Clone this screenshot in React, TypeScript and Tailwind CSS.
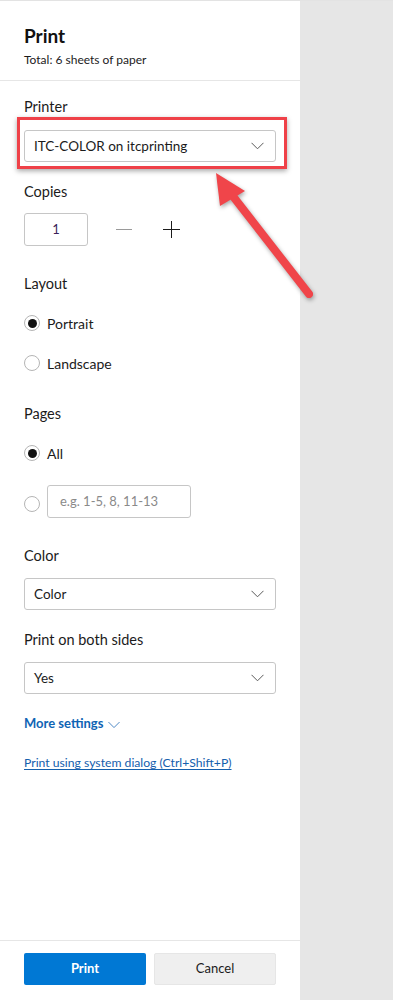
import React from "react";

// ============================================================================
// SMALL PIECES
// ============================================================================

const Chevron = ({ className = "" }: { className?: string }) => (
  <svg className={className} width="13" height="8" viewBox="0 0 13 8" fill="none">
    <path d="M0.5 0.8L6.5 6.8L12.5 0.8" stroke="currentColor" strokeWidth="1" />
  </svg>
);

const Select = ({ value }: { value: string }) => (
  <div className="flex h-8 w-[252px] items-center justify-between rounded-[3px] border border-[#c6c6c6] bg-white pl-[9px] pr-[11px] text-[13.5px] text-[#1b1b1b]">
    <span>{value}</span>
    <Chevron className="text-[#5a5a5a]" />
  </div>
);

const Radio = ({ checked }: { checked?: boolean }) => (
  <span className="flex h-4 w-4 shrink-0 items-center justify-center rounded-full border border-[#b5b5b5] bg-white">
    {checked && <span className="h-[9px] w-[9px] rounded-full bg-[#111]" />}
  </span>
);

const Label = ({ children, className = "" }: { children: React.ReactNode; className?: string }) => (
  <div className={`h-5 text-[14.5px] leading-5 text-[#1b1b1b] ${className}`}>{children}</div>
);

// ============================================================================
// APP
// ============================================================================

export default function App() {
  return (
    <div
      className="relative flex h-[1000px] w-full border-t border-[#e3e3e3] bg-[#e6e6e6]"
      style={{ fontFamily: 'Lato, "Noto Sans", sans-serif' }}
    >
      {/* ====== PRINT PANEL ====== */}
      <aside className="flex h-full w-[300px] flex-col bg-white">
        <header className="h-[80px] border-b border-[#e6e6e6] px-6 pt-[23px]">
          <h1 className="text-[19px] font-bold leading-6 text-[#111]">Print</h1>
          <p className="mt-1 text-[12px] leading-4 text-[#1b1b1b]">Total: 6 sheets of paper</p>
        </header>

        <div className="px-6 pt-[16px]">
          <Label>Printer</Label>
          <div className="mt-[13px]">
            <Select value="ITC-COLOR on itcprinting" />
          </div>

          <Label className="mt-5">Copies</Label>
          <div className="mt-[11px] flex h-[33px] items-center">
            <div className="flex h-[33px] w-16 items-center justify-center rounded-[3px] border border-[#c6c6c6] text-[13px] text-[#3b1f5a]">
              1
            </div>
            <span className="ml-7 h-px w-4 bg-[#9a9a9a]" />
            <svg className="ml-[31px]" width="17" height="17" viewBox="0 0 17 17">
              <path d="M8.5 0V17M0 8.5H17" stroke="#1b1b1b" strokeWidth="1" />
            </svg>
          </div>

          <Label className="mt-7">Layout</Label>
          <div className="mt-[9px]">
            <label className="flex h-10 items-center gap-[7px] text-[14px] text-[#1b1b1b]">
              <Radio checked />
              Portrait
            </label>
            <label className="flex h-10 items-center gap-[7px] text-[14px] text-[#1b1b1b]">
              <Radio />
              Landscape
            </label>
          </div>

          <Label className="mt-[21px]">Pages</Label>
          <label className="mt-[9px] flex h-10 items-center gap-[7px] text-[14px] text-[#1b1b1b]">
            <Radio checked />
            All
          </label>
          <div className="mt-3 flex h-[33px] items-center gap-[7px]">
            <span className="mt-1">
              <Radio />
            </span>
            <div className="flex h-[33px] w-[144px] items-center rounded-[3px] border border-[#c6c6c6] pl-3 text-[13px] text-[#8a8a8a]">
              e.g. 1-5, 8, 11-13
            </div>
          </div>

          <Label className="mt-7">Color</Label>
          <div className="mt-3">
            <Select value="Color" />
          </div>

          <Label className="mt-5">Print on both sides</Label>
          <div className="mt-3">
            <Select value="Yes" />
          </div>

          <div className="mt-5 flex h-5 items-center gap-[5px] text-[13px] font-bold text-[#0f64b4]">
            More settings
            <Chevron className="mt-[2px] w-3 text-[#3f7fc0]" />
          </div>

          <a className="mt-[21px] block text-[12.2px] leading-4 text-[#1560ad] underline underline-offset-2">
            Print using system dialog (Ctrl+Shift+P)
          </a>
        </div>

        {/* ====== FOOTER ====== */}
        <footer className="mt-auto flex gap-2 border-t border-[#e6e6e6] px-6 pb-[15px] pt-3">
          <button className="h-8 w-[122px] rounded-[2px] bg-[#0078d4] text-[13px] font-bold text-white">
            Print
          </button>
          <button className="h-8 w-[122px] rounded-[2px] border border-[#e6e6e6] bg-[#efefef] text-[13px] text-[#1b1b1b]">
            Cancel
          </button>
        </footer>
      </aside>

      {/* ====== PREVIEW AREA ====== */}
      <main className="flex-1 bg-[#e6e6e6]" />

      {/* ====== ANNOTATION: red box + arrow ====== */}
      <div className="pointer-events-none absolute left-[17px] top-[116px] h-[52px] w-[270px] border-[3px] border-[#ef4148] shadow-[0_2px_5px_rgba(0,0,0,0.35)]" />
      <svg
        className="pointer-events-none absolute left-0 top-0"
        width="393"
        height="1000"
        style={{ filter: "drop-shadow(1px 2px 2px rgba(0,0,0,0.35))" }}
      >
        <line x1="309" y1="293" x2="232" y2="194" stroke="#f0454a" strokeWidth="8" strokeLinecap="round" />
        <polygon points="216,172 220,205 245,190" fill="#f0454a" />
      </svg>
    </div>
  );
}
